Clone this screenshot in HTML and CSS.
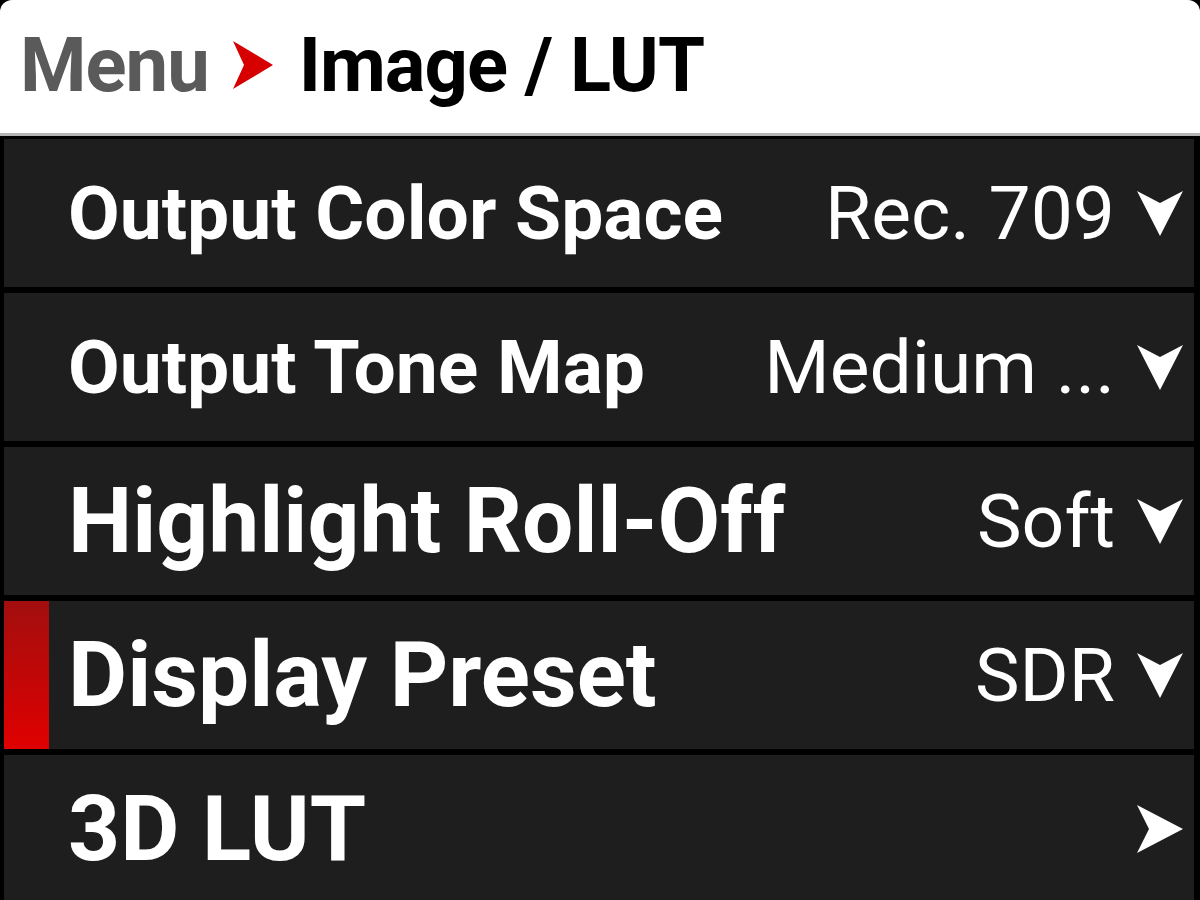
FILE: index.html
```html
<!DOCTYPE html>
<html>
<head>
<meta charset="utf-8">
<link rel="stylesheet" href="styles.css">
</head>
<body>
<div class="screen">
  <div class="header">
    <span class="crumb">Menu</span>
    <svg class="crumb-arrow" viewBox="0 0 40 48" width="40" height="48"><path d="M0 0 L40 24 L0 48 L11 24 Z" fill="#d60000"/></svg>
    <span class="title">Image / LUT</span>
  </div>
  <div class="list">
    <div class="row">
      <span class="label small">Output Color Space</span>
      <span class="value">Rec. 709</span>
      <svg class="chev" viewBox="0 0 46 45" width="46" height="45"><path d="M0 0 L23 12 L46 0 L23 45 Z" fill="#fff"/></svg>
    </div>
    <div class="row">
      <span class="label small">Output Tone Map</span>
      <span class="value">Medium ...</span>
      <svg class="chev" viewBox="0 0 46 45" width="46" height="45"><path d="M0 0 L23 12 L46 0 L23 45 Z" fill="#fff"/></svg>
    </div>
    <div class="row">
      <span class="label">Highlight Roll-Off</span>
      <span class="value">Soft</span>
      <svg class="chev" viewBox="0 0 46 45" width="46" height="45"><path d="M0 0 L23 12 L46 0 L23 45 Z" fill="#fff"/></svg>
    </div>
    <div class="row selected">
      <span class="marker"></span>
      <span class="label">Display Preset</span>
      <span class="value">SDR</span>
      <svg class="chev" viewBox="0 0 46 45" width="46" height="45"><path d="M0 0 L23 12 L46 0 L23 45 Z" fill="#fff"/></svg>
    </div>
    <div class="row">
      <span class="label">3D LUT</span>
      <span class="value"></span>
      <svg class="chev" viewBox="0 0 46 48" width="46" height="48"><path d="M0 0 L46 24 L0 48 L12 24 Z" fill="#fff"/></svg>
    </div>
  </div>
</div>
</body>
</html>
```

FILE: styles.css
```css
html, body {
  margin: 0;
  padding: 0;
  background: #000;
}
.screen {
  width: 1200px;
  height: 900px;
  overflow: hidden;
  background: #000;
  font-family: Roboto, "Liberation Sans", sans-serif;
}
.header {
  background: #fff;
  border-radius: 12px 12px 0 0;
  border-bottom: 3px solid #b4b4b4;
  display: flex;
  align-items: center;
  padding-left: 20px;
  box-sizing: border-box;
  height: 136px;
  padding-bottom: 4px;
}
.crumb {
  font-weight: 700;
  font-size: 76px;
  color: #5a5a5a;
  letter-spacing: -1px;
}
.crumb-arrow {
  margin: 0 26px 0 24px;
}
.title {
  font-weight: 700;
  font-size: 76px;
  color: #000;
  letter-spacing: -1px;
}
.list {
  display: flex;
  flex-direction: column;
  gap: 6px;
  padding: 3px 6px 0 4px;
}
.row {
  position: relative;
  height: 148px;
  flex: none;
  background: #1e1e1e;
  display: flex;
  align-items: center;
  padding: 0 11px 0 64px;
  color: #fff;
}
.label {
  font-weight: 700;
  font-size: 91px;
  flex: 1;
  white-space: nowrap;
}
.label.small {
  font-size: 75px;
}
.value {
  font-size: 75px;
  font-weight: 400;
  margin-right: 22px;
  white-space: nowrap;
}
.marker {
  position: absolute;
  left: 0;
  top: 0;
  bottom: 0;
  width: 45px;
  background: linear-gradient(#a20e0e, #e00000);
}
```
